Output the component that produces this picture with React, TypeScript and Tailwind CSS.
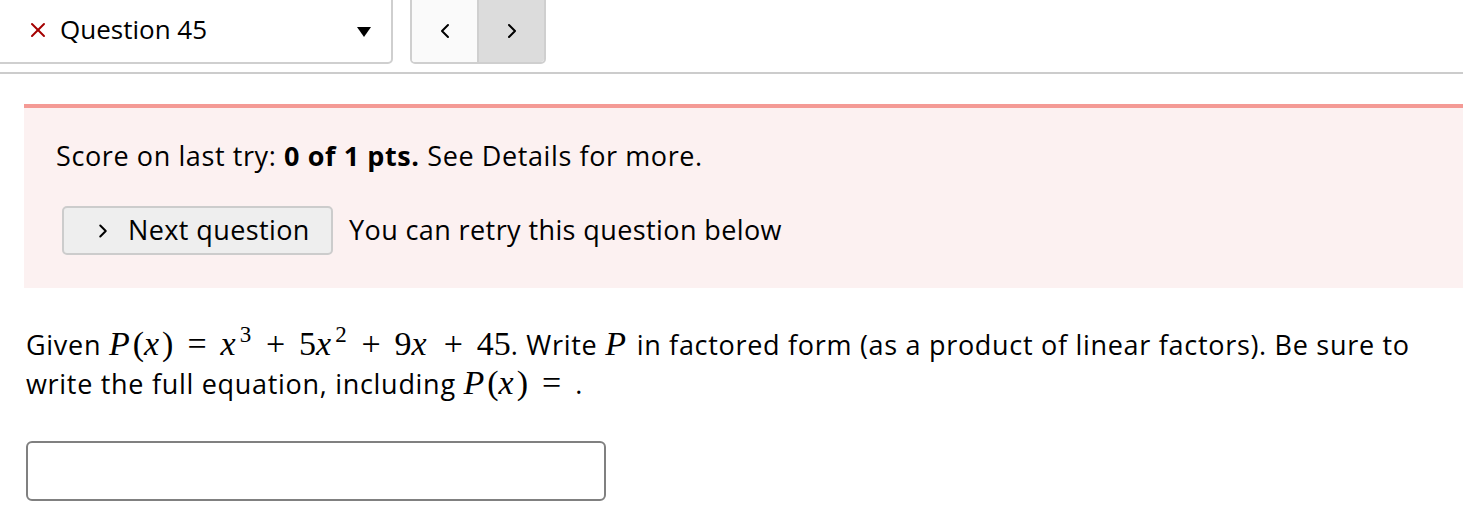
import { ChevronLeft, ChevronRight, X } from "lucide-react";

const sans = "font-['Open_Sans','Noto_Sans',sans-serif]";
const serif = "font-['Liberation_Serif','DejaVu_Serif',serif]";

function V({ children }: { children: React.ReactNode }) {
  return <span className={`${serif} italic text-[34px] tracking-normal leading-none pr-[3px]`}>{children}</span>;
}

function N({ children }: { children: React.ReactNode }) {
  return <span className={`${serif} text-[34px] tracking-normal leading-none`}>{children}</span>;
}

function Op({ children }: { children: React.ReactNode }) {
  return <span className={`${serif} text-[34px] tracking-normal leading-none mx-[14px]`}>{children}</span>;
}

function Sup({ children }: { children: React.ReactNode }) {
  return (
    <span className={`${serif} text-[23px] leading-none relative -top-[13px] ml-[1px]`}>{children}</span>
  );
}

export default function App() {
  return (
    <div className={`w-[1463px] h-[505px] overflow-hidden bg-white text-black tracking-[0.4px] ${sans}`}>
      {/* Top bar */}
      <div className="flex items-start gap-[17px] -mt-[5px]">
        <div className="-ml-[6px] w-[399px] h-[69px] border-2 border-[#cfcfcf] rounded-[5px] bg-white flex items-center pl-[30px] pr-[20px]">
          <X size={24} strokeWidth={2} className="text-[#a40000] mr-[10px]" />
          <span className="text-[26px] tracking-normal flex-1">Question 45</span>
          <span className="w-0 h-0 border-l-[7px] border-r-[7px] border-t-[10px] border-l-transparent border-r-transparent border-t-black mt-[4px]" />
        </div>
        <div className="h-[69px] w-[136px] border-2 border-[#cfcfcf] rounded-[5px] flex overflow-hidden">
          <div className="flex-1 bg-[#fafafa] border-r-2 border-[#cfcfcf] flex items-center justify-center pt-[2px]">
            <ChevronLeft size={24} strokeWidth={2} />
          </div>
          <div className="flex-1 bg-[#dcdcdc] flex items-center justify-center pt-[2px]">
            <ChevronRight size={24} strokeWidth={2} />
          </div>
        </div>
      </div>
      <div className="mt-[8px] h-[2px] bg-[#cccccc]" />

      {/* Score box */}
      <div className="ml-[24px] mt-[30px] h-[184px] border-t-4 border-[#f49a95] bg-[#fcf1f1] pl-[32px] pt-[32px]">
        <p className="text-[27px] leading-[32px] tracking-[0.6px]">
          Score on last try: <b>0 of 1 pts.</b> See Details for more.
        </p>
        <div className="flex items-center mt-[34px] ml-[6px]">
          <button className="h-[49px] w-[271px] bg-[#eeeeee] border-2 border-[#cccccc] rounded-[5px] flex items-center pl-[28px] text-[27px]">
            <ChevronRight size={22} strokeWidth={2.2} className="mr-[14px]" />
            Next question
          </button>
          <span className="text-[27px] ml-[16px]">You can retry this question below</span>
        </div>
      </div>

      {/* Question */}
      <div className="ml-[26px] mt-[37px] text-[27px] leading-[39px] tracking-[0.7px] w-[1400px]">
        Given <V>P</V><N>(</N><V>x</V><N>)</N><Op>=</Op><V>x</V><Sup>3</Sup>
        <Op>+</Op><N>5</N><V>x</V><Sup>2</Sup>
        <Op>+</Op><N>9</N><V>x</V><Op>+</Op><N>45</N>. Write <V>P</V> in factored form (as a
        product of linear factors). Be sure to write the full equation, including{" "}
        <V>P</V><N>(</N><V>x</V><N>)</N><Op>=</Op>.
      </div>

      <div className="ml-[26px] mt-[38px] w-[580px] h-[60px] border-2 border-[#808080] rounded-[6px]" />
    </div>
  );
}
